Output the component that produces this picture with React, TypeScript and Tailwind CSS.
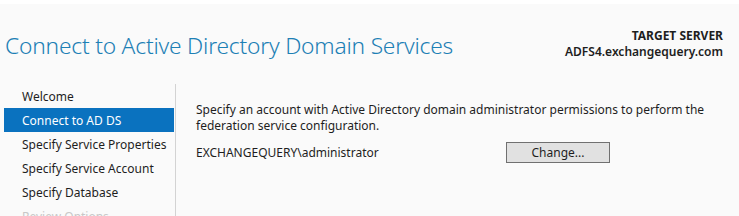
import React from 'react';

const steps = [
  { label: 'Welcome' },
  { label: 'Connect to AD DS', active: true },
  { label: 'Specify Service Properties' },
  { label: 'Specify Service Account' },
  { label: 'Specify Database' },
  { label: 'Review Options', disabled: true },
];

const font = { fontFamily: '"Noto Sans", "Open Sans", sans-serif' };

const App: React.FC = () => {
  return (
    <div
      className="w-[739px] h-[216px] overflow-hidden bg-[#fafafa] text-[#1e1e1e] flex flex-col"
      style={font}
    >
      {/* header */}
      <div className="h-[4px] bg-white shrink-0" />
      <header className="h-[80px] shrink-0 flex items-start justify-between pl-[5px] pr-[16px]">
        <h1 className="mt-[27px] text-[22.75px] font-light text-[#1d80b5] tracking-[-0.2px] leading-[30px]">
          Connect to Active Directory Domain Services
        </h1>
        <div className="mt-[24px] text-right text-[12px] leading-[16px]">
          <div className="font-bold">TARGET SERVER</div>
          <div className="font-semibold">ADFS4.exchangequery.com</div>
        </div>
      </header>

      <div className="flex flex-1 min-h-0">
        {/* step list */}
        <nav className="w-[176px] pl-[4px] pr-[1px] border-r border-[#d3d3d3] shrink-0">
          {steps.map(s => (
            <div
              key={s.label}
              className={
                s.active
                  ? 'h-[24px] pl-[18px] pt-[1px] flex items-center text-[12px] bg-[#0a72bf] text-white'
                  : s.disabled
                    ? 'h-[24px] pl-[18px] pt-[1px] flex items-center text-[12px] text-[#c8c8c8]'
                    : 'h-[24px] pl-[18px] pt-[1px] flex items-center text-[12px] text-[#1e1e1e]'
              }
            >
              {s.label}
            </div>
          ))}
        </nav>

        {/* content */}
        <main className="flex-1 pl-[20px] pt-[18px] text-[12px] leading-[16px]">
          <p>
            Specify an account with Active Directory domain administrator permissions to perform the
            <br />
            federation service configuration.
          </p>
          <div className="flex items-center mt-[8px]">
            <span className="w-[310px]">EXCHANGEQUERY\administrator</span>
            <button className="w-[104px] h-[21px] bg-[#e1e1e1] border border-[#707070] text-[12px] leading-[18px] text-[#1e1e1e]">
              Change...
            </button>
          </div>
        </main>
      </div>
    </div>
  );
};

export default App;
